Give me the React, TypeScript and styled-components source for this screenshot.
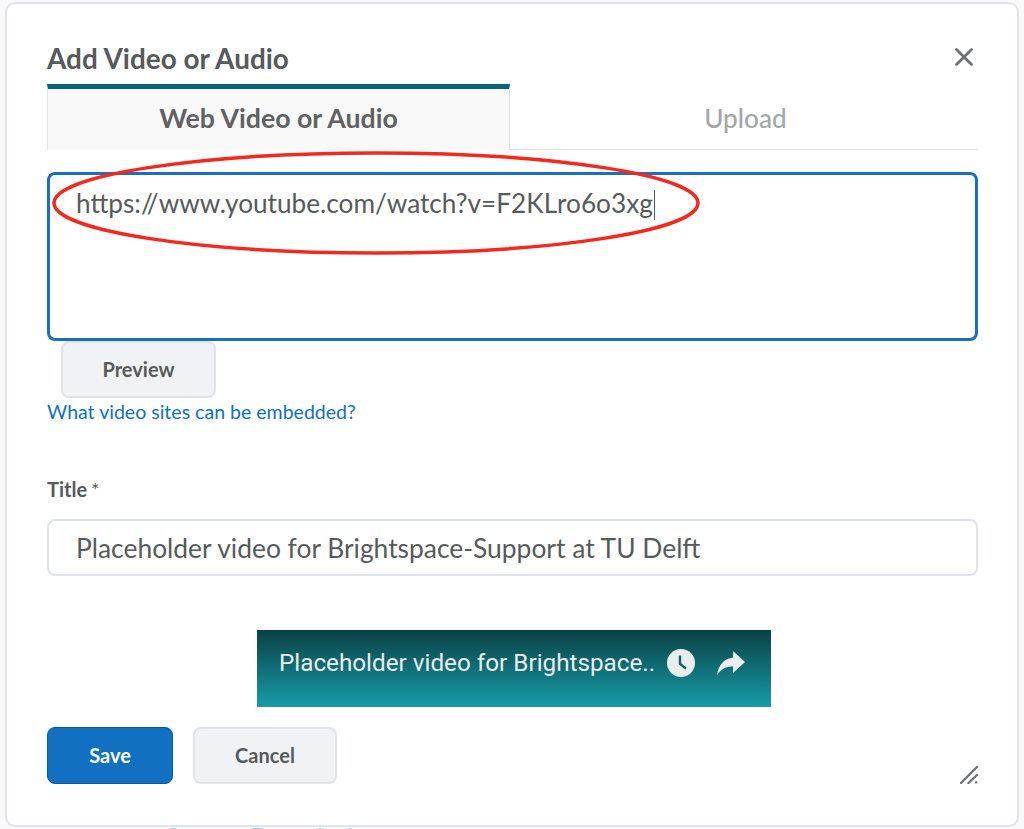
import React from 'react';
import styled, { createGlobalStyle } from 'styled-components';

const GlobalStyle = createGlobalStyle`
  html, body {
    margin: 0;
    padding: 0;
    background: #f9f9fa;
  }
  * {
    box-sizing: border-box;
  }
`;

const Page = styled.div`
  position: relative;
  width: 1024px;
  height: 829px;
  padding: 2px 5px;
  overflow: hidden;
  font-family: Lato, "Open Sans", sans-serif;
  color: #565a5c;
`;

// page content that sticks out under the dialog
const BehindText = styled.div`
  position: absolute;
  left: 163px;
  top: 821px;
  font-size: 26px;
  line-height: 34px;
  color: #a9c6e0;
`;

const Dialog = styled.div`
  position: relative;
  height: 825px;
  padding: 36px 39px 0 40px;
  background: #fff;
  border: 2px solid #dfe3ec;
  border-radius: 10px;
`;

const Header = styled.div`
  display: flex;
  justify-content: space-between;
  align-items: flex-start;
  margin-bottom: 8px;
`;

const Heading = styled.h1`
  margin: 0;
  font-size: 27.9px;
  line-height: 36px;
  font-weight: 700;
  color: #565a5c;
`;

const CloseButton = styled.button`
  width: 20px;
  height: 20px;
  margin: 7px 4px 0 0;
  padding: 0;
  border: 0;
  background: none;
  display: flex;
`;

const TabList = styled.div`
  display: flex;
  height: 66px;
  border-bottom: 1px solid #dcdfe3;
`;

const Tab = styled.div<{ $active?: boolean }>`
  width: ${(p) => (p.$active ? '463px' : 'auto')};
  flex: ${(p) => (p.$active ? 'none' : '1')};
  display: flex;
  align-items: center;
  justify-content: center;
  padding: ${(p) => (p.$active ? '0 0 3px' : '3px 0 0 3px')};
  font-size: ${(p) => (p.$active ? '26.7px' : '26.2px')};
  font-weight: ${(p) => (p.$active ? 700 : 500)};
  color: ${(p) => (p.$active ? '#5f6163' : '#a4a7a9')};
  background: ${(p) => (p.$active ? '#f9f9f9' : 'transparent')};
  border-top: ${(p) => (p.$active ? '5px solid #0b6382' : '0')};
  border-left: ${(p) => (p.$active ? '1px solid #e3e5e8' : '0')};
  border-right: ${(p) => (p.$active ? '1px solid #dcdfe3' : '0')};
  margin-bottom: ${(p) => (p.$active ? '-1px' : '0')};
`;

const UrlBox = styled.div`
  height: 169px;
  margin-top: 22px;
  padding: 10px 26px;
  border: 3px solid #1a6fc0;
  border-radius: 8px;
  font-size: 26.2px;
  line-height: 36px;
  color: #565a5c;
`;

const Caret = styled.span`
  display: inline-block;
  width: 1px;
  height: 30px;
  margin-left: 1px;
  vertical-align: -7px;
  background: #565a5c;
`;

// red marker drawn on top of the screenshot
const Ellipse = styled.svg`
  position: absolute;
  left: 42px;
  top: 145px;
  pointer-events: none;
`;

const SmallButton = styled.button<{ $primary?: boolean; $width: number }>`
  width: ${(p) => p.$width}px;
  height: 57px;
  padding: 0 0 1px;
  font-family: inherit;
  font-size: 20px;
  font-weight: 700;
  border-radius: 8px;
  color: ${(p) => (p.$primary ? '#fff' : '#565a5c')};
  background: ${(p) => (p.$primary ? '#1170c2' : '#f1f2f5')};
  border: ${(p) => (p.$primary ? '1px solid #0b579e' : '2px solid #dfe3ec')};
`;

const PreviewRow = styled.div`
  padding-left: 14px;
  display: flex;
`;

const HelpLink = styled.a`
  display: block;
  margin-top: 2px;
  font-size: 19.55px;
  line-height: 24px;
  color: #1170c2;
`;

const FieldLabel = styled.label`
  display: block;
  margin-top: 53px;
  font-size: 20px;
  line-height: 24px;
  font-weight: 700;
  color: #565a5c;
`;

const Required = styled.span`
  margin-left: 4px;
  font-weight: 400;
  font-size: 20px;
`;

const TitleBox = styled.div`
  height: 57px;
  margin-top: 18px;
  padding: 0 27px;
  display: flex;
  align-items: center;
  border: 2px solid #dfe3ec;
  border-radius: 8px;
  font-size: 26.4px;
  color: #565a5c;
`;

const EmbedRow = styled.div`
  margin-top: 54px;
  padding-left: 3px;
  display: flex;
  justify-content: center;
`;

const EmbedPreview = styled.div`
  width: 514px;
  height: 77px;
  padding: 0 22px 11px;
  display: flex;
  align-items: center;
  background: linear-gradient(#0a4145, #179ca8);
  color: #e8eeee;
  font-family: Roboto, sans-serif;
  font-size: 24.25px;
  white-space: nowrap;
`;

const EmbedTitle = styled.span`
  width: 388px;
  flex: none;
`;

const EmbedIcons = styled.div`
  display: flex;
  align-items: center;
  gap: 22px;
`;

const Footer = styled.div`
  margin-top: 20px;
  display: flex;
  gap: 20px;
`;

const ResizeHandle = styled.svg`
  margin-left: auto;
  align-self: flex-end;
`;

export default function App() {
  return (
    <>
      <GlobalStyle />
      <Page>
        <BehindText>Course Description</BehindText>
        <Dialog>
          <Header>
            <Heading>Add Video or Audio</Heading>
            <CloseButton aria-label="Close">
              <svg width="20" height="20" viewBox="0 0 20 20">
                <path d="M2.5 2.5L17.5 17.5M17.5 2.5L2.5 17.5" stroke="#6e7277" strokeWidth="2.8" strokeLinecap="round" />
              </svg>
            </CloseButton>
          </Header>
          <TabList>
            <Tab $active>Web Video or Audio</Tab>
            <Tab>Upload</Tab>
          </TabList>
          <UrlBox>
            https://www.youtube.com/watch?v=F2KLro6o3xg
            <Caret />
          </UrlBox>
          <PreviewRow>
            <SmallButton $width={155}>Preview</SmallButton>
          </PreviewRow>
          <HelpLink>What video sites can be embedded?</HelpLink>
          <FieldLabel>
            Title<Required>*</Required>
          </FieldLabel>
          <TitleBox>Placeholder video for Brightspace-Support at TU Delft</TitleBox>
          <EmbedRow>
            <EmbedPreview>
              <EmbedTitle>Placeholder video for Brightspace..</EmbedTitle>
              <EmbedIcons>
                <svg width="28" height="28" viewBox="0 0 28 28">
                  <circle cx="14" cy="14" r="14" fill="#e8eeee" />
                  <path d="M13 6.5V15L19 19.5" fill="none" stroke="#0f6067" strokeWidth="2.4" />
                </svg>
                <svg width="28" height="24" viewBox="0 0 28 24">
                  <path d="M16 0L28 11L16 22V15.5C9 15.5 4 18 0 24C1.5 14 7 7.5 16 6.5Z" fill="#e8eeee" />
                </svg>
              </EmbedIcons>
            </EmbedPreview>
          </EmbedRow>
          <Footer>
            <SmallButton $primary $width={126}>Save</SmallButton>
            <SmallButton $width={144}>Cancel</SmallButton>
            <ResizeHandle width="18" height="18" viewBox="0 0 18 18">
              <path d="M1 17L17 1M8.5 17L17 9M16 16.5L16.2 16.3" stroke="#6e7277" strokeWidth="2.4" strokeLinecap="round" fill="none" />
            </ResizeHandle>
          </Footer>
          <Ellipse width="664" height="112" viewBox="0 0 664 112">
            <ellipse cx="327" cy="54" rx="322" ry="50" fill="none" stroke="#f5281e" strokeWidth="3.5" />
          </Ellipse>
        </Dialog>
      </Page>
    </>
  );
}
